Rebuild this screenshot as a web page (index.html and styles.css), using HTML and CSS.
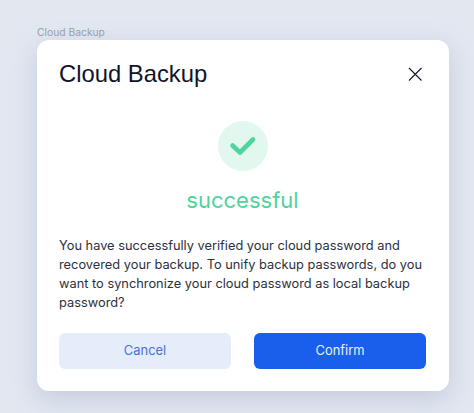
FILE: index.html
```html
<!DOCTYPE html>
<html lang="en">
<head>
	<meta charset="UTF-8">
	<meta name="viewport" content="width=device-width, initial-scale=1.0">
	<title>Cloud Backup</title>

	<link rel="stylesheet" href="styles.css">
</head>
<body>
	<div class="page-label">Cloud Backup</div>
	<div class="dialog">
		<div class="header">
			<div class="title">Cloud Backup</div>
			<svg class="close" width="14" height="14" viewBox="0 0 14 14">
				<path d="M1 1L13.5 13.5M13.5 1L1 13.5" stroke="#14192b" stroke-width="1.1" fill="none"/>
			</svg>
		</div>
		<div class="status">
			<div class="status-icon">
				<svg width="28" height="22" viewBox="0 0 28 22">
					<path d="M3.5 10.5L11 17.5L24 4.5" stroke="#4fd49c" stroke-width="4.6" stroke-linecap="round" stroke-linejoin="round" fill="none"/>
				</svg>
			</div>
			<div class="status-text">successful</div>
		</div>
		<p class="message">You have successfully verified your cloud password and recovered your backup. To unify backup passwords, do you want to synchronize your cloud password as local backup password?</p>
		<div class="actions">
			<div class="btn btn-cancel">Cancel</div>
			<div class="btn btn-confirm">Confirm</div>
		</div>
	</div>
</body>
</html>
```

FILE: styles.css
```css
html, body {
	height: 100%;
}

body {
	margin: 0;
	padding: 25px 25px 0 37px;
	box-sizing: border-box;
	overflow: hidden;
	background: #e2e7f0;
	font-family: Inter, "Liberation Sans", sans-serif;
}

.page-label {
	height: 15px;
	font-size: 10.3px;
	line-height: 15px;
	color: #98a0ad;
}

.dialog {
	width: 412px;
	height: 351px;
	box-sizing: border-box;
	padding: 0 23px 0 22px;
	background: #fff;
	border-radius: 12px;
	box-shadow: 0 8px 24px rgba(150, 165, 195, 0.4);
}

.header {
	display: flex;
	justify-content: space-between;
	align-items: center;
	height: 68px;
}

.title {
	font-family: "Liberation Sans", sans-serif;
	font-size: 23.8px;
	color: #10142a;
}

.close {
	margin-right: 4px;
}

.status {
	display: flex;
	flex-direction: column;
	align-items: center;
	margin-top: 13px;
}

.status-icon {
	display: flex;
	justify-content: center;
	align-items: center;
	width: 50px;
	height: 50px;
	border-radius: 50%;
	background: #e2f7ee;
}

.status-text {
	margin-top: 14px;
	font-size: 22px;
	line-height: 30px;
	color: #4fd49c;
}

.message {
	margin: 21px 0 0;
	font-size: 12.82px;
	line-height: 19px;
	color: #2b3040;
}

.actions {
	display: flex;
	gap: 23px;
	margin-top: 21px;
}

.btn {
	flex: 1;
	height: 36px;
	border-radius: 6px;
	font-size: 12.9px;
	line-height: 36px;
	text-align: center;
}

.btn-cancel {
	background: #e5edfb;
	color: #4a70d8;
}

.btn-confirm {
	background: #1a5fec;
	color: #e8effd;
}
```
